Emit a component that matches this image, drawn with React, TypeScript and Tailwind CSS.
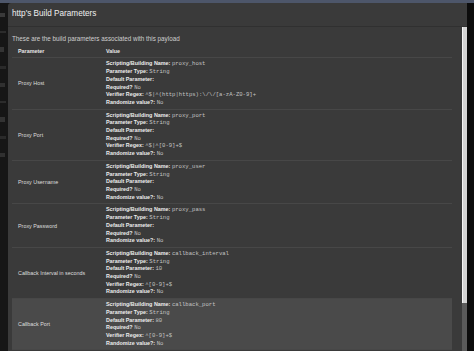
import React from 'react';

interface BuildParam {
  label: string;
  name: string;
  type: string;
  defaultValue: string;
  required: string;
  regex?: string;
  randomize: string;
  active?: boolean;
}

const params: BuildParam[] = [
  {
    label: 'Proxy Host',
    name: 'proxy_host',
    type: 'String',
    defaultValue: '',
    required: 'No',
    regex: '^$|^(http|https):\\/\\/[a-zA-Z0-9]+',
    randomize: 'No',
  },
  {
    label: 'Proxy Port',
    name: 'proxy_port',
    type: 'String',
    defaultValue: '',
    required: 'No',
    regex: '^$|^[0-9]+$',
    randomize: 'No',
  },
  {
    label: 'Proxy Username',
    name: 'proxy_user',
    type: 'String',
    defaultValue: '',
    required: 'No',
    randomize: 'No',
  },
  {
    label: 'Proxy Password',
    name: 'proxy_pass',
    type: 'String',
    defaultValue: '',
    required: 'No',
    randomize: 'No',
  },
  {
    label: 'Callback Interval in seconds',
    name: 'callback_interval',
    type: 'String',
    defaultValue: '10',
    required: 'No',
    regex: '^[0-9]+$',
    randomize: 'No',
  },
  {
    label: 'Callback Port',
    name: 'callback_port',
    type: 'String',
    defaultValue: '80',
    required: 'No',
    regex: '^[0-9]+$',
    randomize: 'No',
    active: true,
  },
];

function Field({ k, v }: { k: string; v: string }) {
  return (
    <div className="whitespace-nowrap">
      <span className="font-bold text-[#ececec]">{k}</span>{' '}
      <span className="font-['Liberation_Mono',monospace] text-[5.6px] text-[#c4c4c4]">{v}</span>
    </div>
  );
}

export default function App() {
  return (
    <div className="w-[474px] h-[351px] overflow-hidden bg-[#121212] flex flex-col font-['Liberation_Sans',Arial,sans-serif]">
      {/* top strip of the page behind */}
      <div className="h-[3px] bg-[#4d566a] shrink-0"></div>

      <div className="flex flex-1 min-h-0">
        {/* page content peeking out on the left */}
        <div className="w-[8px] shrink-0 flex flex-col gap-[14px] pt-[10px] bg-[#161616]">
          <div className="h-[4px] w-[5px] bg-[#3a3a3a]"></div>
          <div className="h-[2px] w-[6px] bg-[#2c2c2c]"></div>
          <div className="h-[5px] w-[4px] bg-[#343434]"></div>
          <div className="h-[3px] w-[6px] bg-[#2a2a2a]"></div>
          <div className="h-[4px] w-[5px] bg-[#303030]"></div>
          <div className="h-[2px] w-[6px] bg-[#2c2c2c]"></div>
          <div className="h-[5px] w-[5px] bg-[#333333]"></div>
          <div className="h-[3px] w-[6px] bg-[#2a2a2a]"></div>
          <div className="h-[4px] w-[5px] bg-[#303030]"></div>
        </div>

        {/* modal */}
        <div className="w-[459px] shrink-0 bg-[#3a3a3a] rounded-tl-[3px] flex flex-col">
          <div className="h-[24px] shrink-0 flex items-center px-[4px] border-b border-[#303030]">
            <h2 className="text-[8.2px] text-[#f0f0f0]">http's Build Parameters</h2>
          </div>

          <div className="flex flex-1 min-h-0">
            <div className="flex-1 min-w-0 pl-[4px] pr-[10px]">
              <p className="text-[6.3px] text-[#cfcfcf] pt-[7px] pb-[2px]">
                These are the build parameters associated with this payload
              </p>

              <div className="text-[5.4px] text-[#e6e6e6]">
                <div className="flex h-[13px] items-center border-b border-[#474747] font-bold">
                  <div className="w-[94px] pl-[6px]">Parameter</div>
                  <div>Value</div>
                </div>

                {params.map((p) => (
                  <div
                    key={p.name}
                    className={`flex items-center border-b border-[#474747] py-[2px] ${p.active ? 'bg-[#4a4a4a]' : ''}`}
                  >
                    <div className="w-[94px] shrink-0 pl-[6px] text-[#dedede]">{p.label}</div>
                    <div className="leading-[7.7px]">
                      <Field k="Scripting/Building Name:" v={p.name} />
                      <Field k="Parameter Type:" v={p.type} />
                      <Field k="Default Parameter:" v={p.defaultValue} />
                      <Field k="Required?" v={p.required} />
                      {p.regex && <Field k="Verifier Regex:" v={p.regex} />}
                      <Field k="Randomize value?:" v={p.randomize} />
                    </div>
                  </div>
                ))}
              </div>
            </div>

            {/* scrollbar */}
            <div className="w-[5px] shrink-0 bg-[#5a5a5a] flex flex-col">
              <div className="h-[276px] bg-[#d4d4d4] border-l border-[#f4f4f4]"></div>
            </div>
          </div>
        </div>

        <div className="flex-1 bg-[#0c0c0c]"></div>
      </div>
    </div>
  );
}
